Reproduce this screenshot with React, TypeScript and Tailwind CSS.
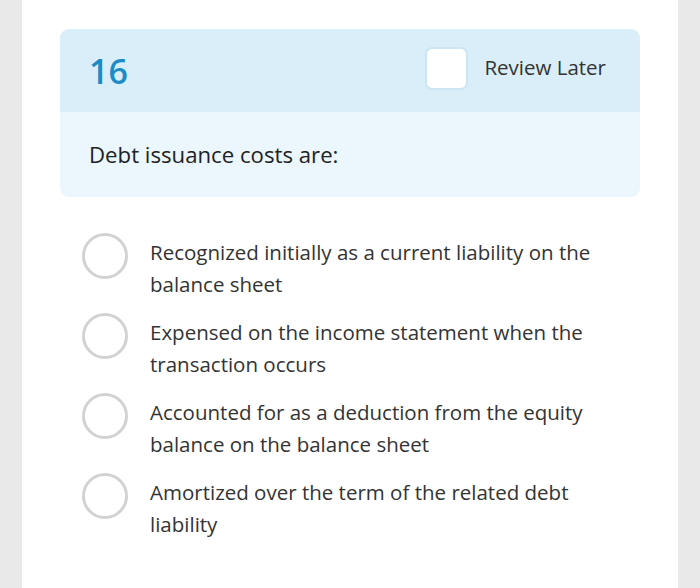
const options = [
  "Recognized initially as a current liability on the balance sheet",
  "Expensed on the income statement when the transaction occurs",
  "Accounted for as a deduction from the equity balance on the balance sheet",
  "Amortized over the term of the related debt liability",
];

export default function App() {
  return (
    <div
      className="flex min-h-[588px] w-[700px] bg-[#e9e9e9] px-[22px]"
      style={{ fontFamily: '"Open Sans", "Noto Sans", sans-serif' }}
    >
      <div className="w-full bg-white px-[38px] pt-[29px]">
        <section className="overflow-hidden rounded-[9px]">
          <div className="flex h-[83px] items-center justify-between bg-[#d9eef8] pl-[29px] pr-[34px]">
            <span className="text-[34px] font-semibold leading-none text-[#1b8cc6]">16</span>
            <label className="flex items-center gap-4">
              <span className="mt-[-4px] h-[43px] w-[43px] rounded-[7px] border-2 border-[#cbe5f2] bg-white" />
              <span className="mt-[-6px] text-[20.5px] text-[#333]">Review Later</span>
            </label>
          </div>
          <div className="flex h-[85px] items-center bg-[#ebf6fd] px-[29px]">
            <p className="text-[22.2px] text-[#222]">Debt issuance costs are:</p>
          </div>
        </section>

        <ul className="mt-[39px] flex flex-col gap-4 pl-[22px]">
          {options.map((text) => (
            <li key={text} className="flex items-start gap-[22px]">
              <span className="mt-[-3px] h-[46px] w-[46px] shrink-0 rounded-full border-[3px] border-[#d2d2d2]" />
              <span className="w-[478px] text-[20.5px] leading-[32px] text-[#333]">{text}</span>
            </li>
          ))}
        </ul>
      </div>
    </div>
  );
}
